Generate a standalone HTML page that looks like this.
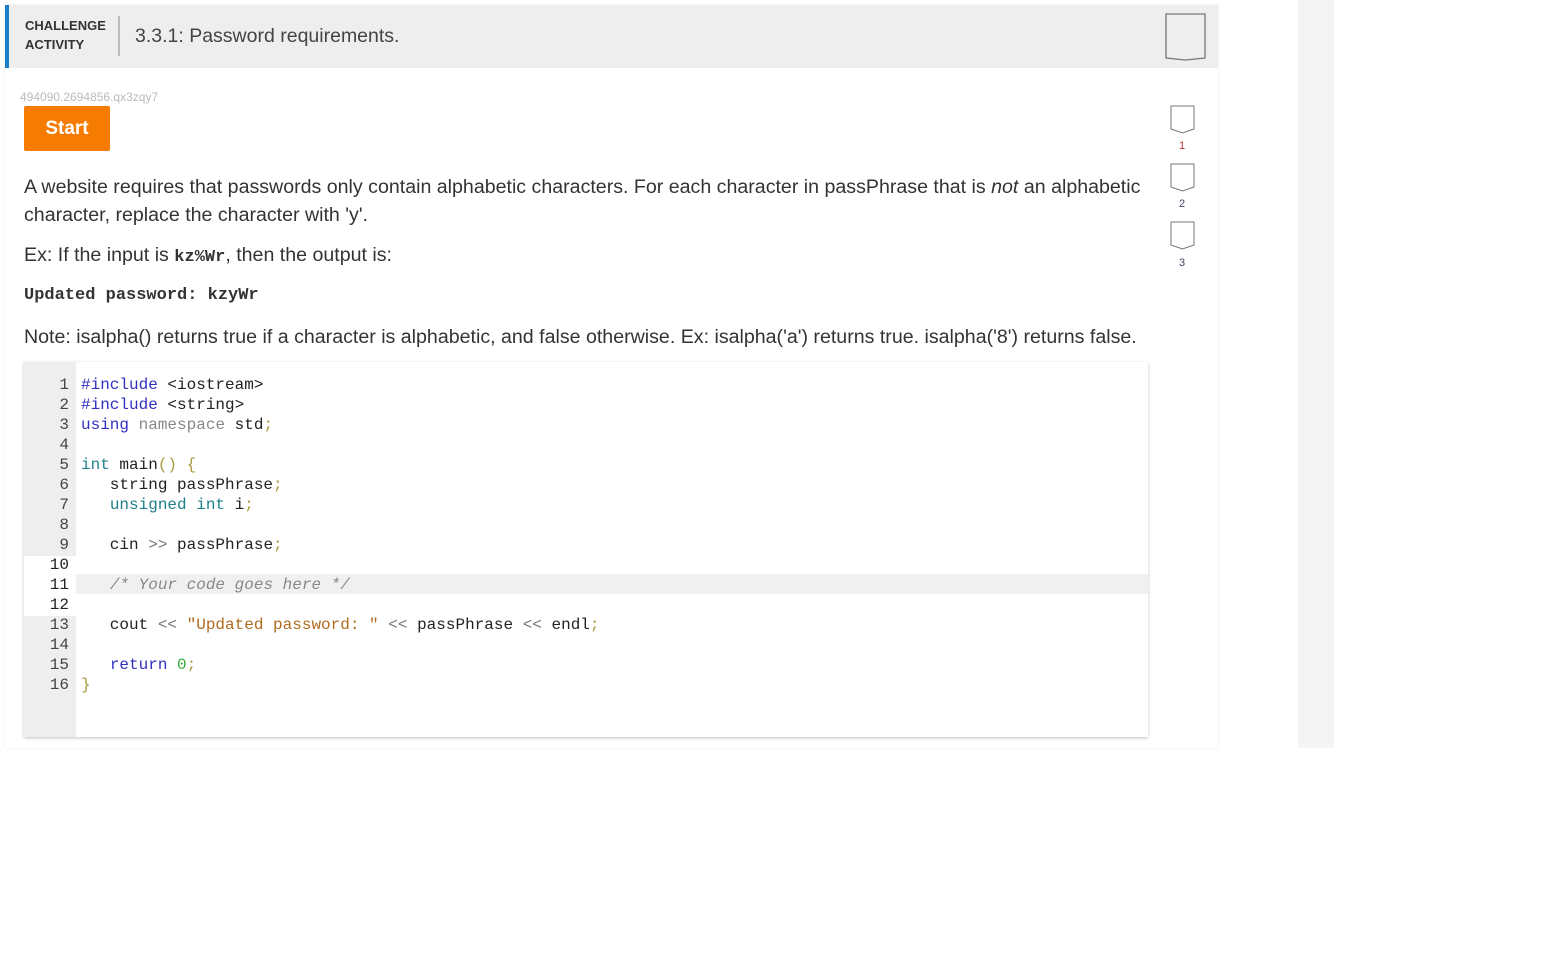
<!DOCTYPE html>
<html><head><meta charset="utf-8"><style>
body{margin:0;background:#fff;font-family:"Liberation Sans",sans-serif;width:1547px;height:961px;position:relative;overflow:hidden}
.card{position:absolute;left:5px;top:5px;width:1213px;height:743px;background:#fff;box-shadow:0 0 2px rgba(0,0,0,.12)}
.hdr{position:absolute;left:0;top:0;width:1213px;height:63px;background:#eee;border-left:4px solid #1a7ec8;box-sizing:border-box}
.lbl{position:absolute;left:16px;top:11px;font-size:13px;font-weight:bold;color:#333;line-height:19px}
.sep{position:absolute;left:109px;top:11px;width:2px;height:40px;background:#bbb}
.title{position:absolute;left:126px;top:20px;font-size:19.5px;color:#444}
.side{position:absolute;left:1298px;top:0;width:36px;height:748px;background:#f4f4f4}
.id{position:absolute;left:20px;top:90px;font-size:12px;color:#bbb}
.btn{position:absolute;left:24px;top:106px;width:86px;height:45px;background:#f57c00;border-radius:2px;color:#fff;font-weight:bold;font-size:19px;line-height:45px;text-align:center}
.p{position:absolute;left:24px;font-size:19.6px;color:#333;line-height:28px;width:1130px}
.mono{font-family:"Liberation Mono",monospace}
.ed{position:absolute;left:24px;top:362px;width:1124px;height:375px;background:#fff;box-shadow:0 1px 3px rgba(0,0,0,.25)}
.gut{position:absolute;left:0;top:0;width:52px;height:375px;background:#eee}
.gw{position:absolute;left:0;top:194px;width:52px;height:60px;background:#fff}
.act{position:absolute;left:52px;top:212px;width:1072px;height:20px;background:#f0f0f0}
.code{position:absolute;left:0;top:13px;font-family:"Liberation Mono",monospace;font-size:16px;line-height:20px;white-space:pre;color:#222}
.ln{display:inline-block;width:45px;text-align:right;color:#444;margin-right:12px}
.k{color:#3030c0}.t{color:#20808a}.g{color:#888}.s{color:#b06a20}.n{color:#3a3}.p2{color:#aa9a40}.c{color:#888;font-style:italic}.o{color:#777}
</style></head><body>
<div class="side"></div>
<div class="card">
<div class="hdr"><div class="lbl">CHALLENGE<br>ACTIVITY</div><div class="sep"></div><div class="title">3.3.1: Password requirements.</div></div>
<svg style="position:absolute;left:1160px;top:8px" width="42" height="50"><path d="M1 1H40V45L20.5 47L1 45Z" fill="#eee" stroke="#777" stroke-width="1.3"/></svg>
<svg style="position:absolute;left:1165px;top:100px" width="26" height="32"><path d="M1 1H24V24L12.5 28L1 24Z" fill="#fff" stroke="#777"/></svg>
<div style="position:absolute;left:1174px;top:135px;font-size:11px;color:#b33">1</div>
<svg style="position:absolute;left:1165px;top:158px" width="26" height="32"><path d="M1 1H24V24L12.5 28L1 24Z" fill="#fff" stroke="#777"/></svg>
<div style="position:absolute;left:1174px;top:193px;font-size:11px;color:#446">2</div>
<svg style="position:absolute;left:1165px;top:216px" width="26" height="32"><path d="M1 1H24V24L12.5 28L1 24Z" fill="#fff" stroke="#777"/></svg>
<div style="position:absolute;left:1174px;top:252px;font-size:11px;color:#446">3</div>
</div>
<div class="id">494090.2694856.qx3zqy7</div>
<div class="btn">Start</div>
<div class="p" style="top:173px">A website requires that passwords only contain alphabetic characters. For each character in passPhrase that is <i>not</i> an alphabetic character, replace the character with 'y'.</div>
<div class="p" style="top:241px">Ex: If the input is <b class="mono" style="font-size:17px">kz%Wr</b>, then the output is:</div>
<div class="p mono" style="top:282px;font-size:17px;font-weight:bold">Updated password: kzyWr</div>
<div class="p" style="top:323px;width:1200px">Note: isalpha() returns true if a character is alphabetic, and false otherwise. Ex: isalpha('a') returns true. isalpha('8') returns false.</div>
<div class="ed"><div class="gut"></div><div class="gw"></div><div class="act"></div>
<div class="code"><span class="ln">1</span><span class="k">#include</span> &lt;iostream&gt;
<span class="ln">2</span><span class="k">#include</span> &lt;string&gt;
<span class="ln">3</span><span class="k">using</span> <span class="g">namespace</span> std<span class="p2">;</span>
<span class="ln">4</span>
<span class="ln">5</span><span class="t">int</span> main<span class="p2">() {</span>
<span class="ln">6</span>   string passPhrase<span class="p2">;</span>
<span class="ln">7</span>   <span class="t">unsigned int</span> i<span class="p2">;</span>
<span class="ln">8</span>
<span class="ln">9</span>   cin <span class="o">&gt;&gt;</span> passPhrase<span class="p2">;</span>
<span class="ln" style="color:#222">10</span>
<span class="ln" style="color:#222">11</span>   <span class="c">/* Your code goes here */</span>
<span class="ln" style="color:#222">12</span>
<span class="ln">13</span>   cout <span class="o">&lt;&lt;</span> <span class="s">"Updated password: "</span> <span class="o">&lt;&lt;</span> passPhrase <span class="o">&lt;&lt;</span> endl<span class="p2">;</span>
<span class="ln">14</span>
<span class="ln">15</span>   <span class="k">return</span> <span class="n">0</span><span class="p2">;</span>
<span class="ln">16</span><span class="p2">}</span></div>
</div>
</body></html>
